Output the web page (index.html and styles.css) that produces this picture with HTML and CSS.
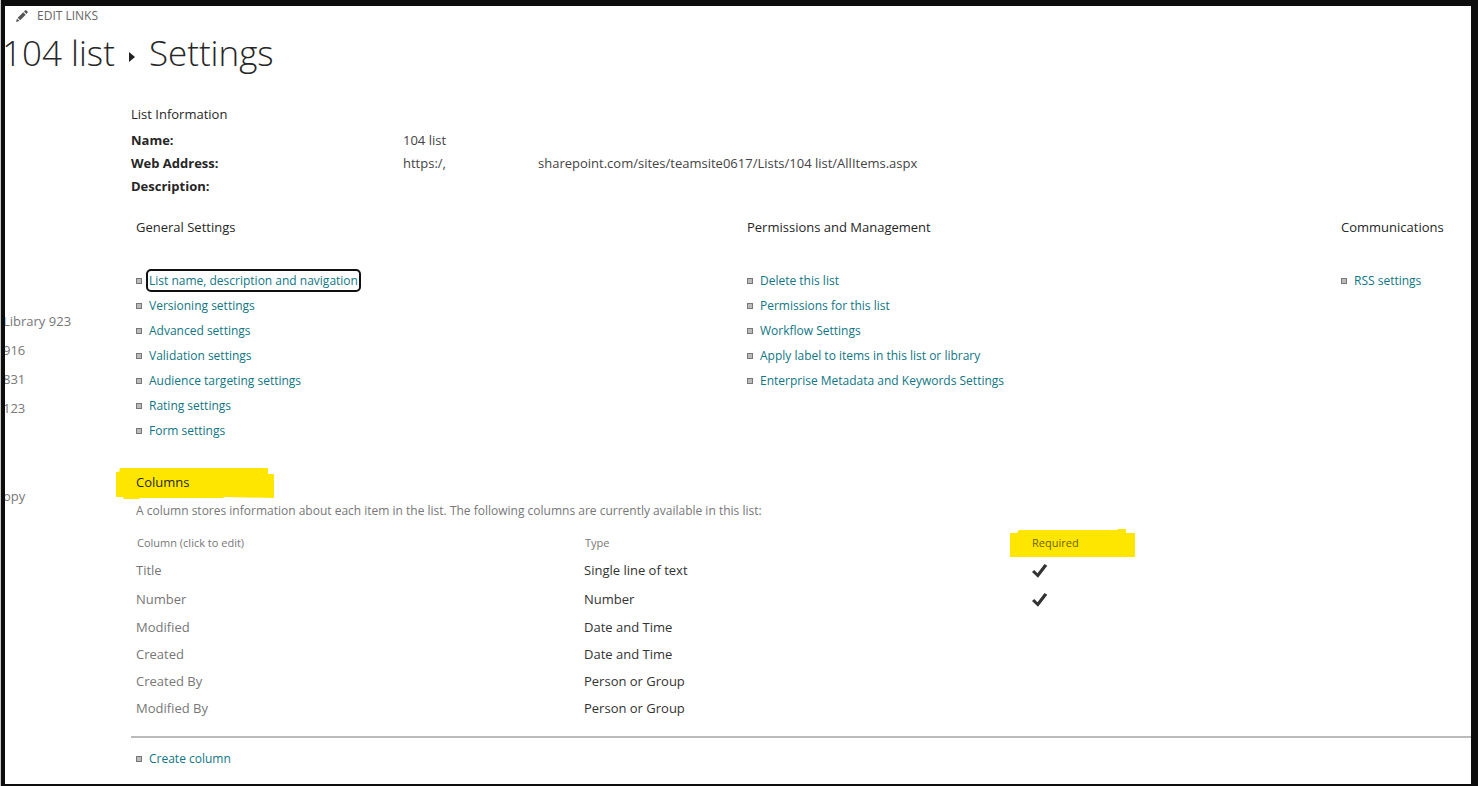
FILE: index.html
```html
<!DOCTYPE html>
<html lang="en">
<head>
<meta charset="utf-8">
<title>104 list - Settings</title>
<link rel="stylesheet" href="styles.css">
</head>
<body>
<div class="page">
  <header class="header">
    <button class="edit-links" type="button">
      <svg class="pencil" viewBox="0 0 12 12" aria-hidden="true"><path d="M0 12 1 8.500 3.500 11zM1.700 7.800 7.300 2.300 9.700 4.700 4.200 10.300zM8 1.600 9.300.3Q9.700 0 10.200.3L11.700 1.800Q12 2.200 11.700 2.600L10.400 4z"/></svg>
      <span>EDIT LINKS</span>
    </button>
    <h1 class="title">
      <span>104 list</span>
      <svg class="crumb" viewBox="0 0 6 10" aria-hidden="true"><path d="M0 0 6 5 0 10z"/></svg>
      <span>Settings</span>
    </h1>
  </header>
  <div class="body">
    <nav class="side" aria-label="Site">
      <a href="#">Library 923</a>
      <a href="#">916</a>
      <a href="#">831</a>
      <a href="#">123</a>
      <a class="side-last" href="#">opy</a>
    </nav>
    <main class="main">
      <section>
        <h2 class="heading">List Information</h2>
        <dl class="info">
          <dt>Name:</dt><dd>104 list</dd>
          <dt>Web Address:</dt><dd class="address"><span>https:/,</span><span>sharepoint.com/sites/teamsite0617/Lists/104 list/AllItems.aspx</span></dd>
          <dt>Description:</dt><dd></dd>
        </dl>
      </section>
      <div class="groups">
        <section>
          <h2 class="heading">General Settings</h2>
          <ul class="links">
            <li><a class="focused" href="#">List name, description and navigation</a></li>
            <li><a href="#">Versioning settings</a></li>
            <li><a href="#">Advanced settings</a></li>
            <li><a href="#">Validation settings</a></li>
            <li><a href="#">Audience targeting settings</a></li>
            <li><a href="#">Rating settings</a></li>
            <li><a href="#">Form settings</a></li>
          </ul>
        </section>
        <section>
          <h2 class="heading">Permissions and Management</h2>
          <ul class="links">
            <li><a href="#">Delete this list</a></li>
            <li><a href="#">Permissions for this list</a></li>
            <li><a href="#">Workflow Settings</a></li>
            <li><a href="#">Apply label to items in this list or library</a></li>
            <li><a href="#">Enterprise Metadata and Keywords Settings</a></li>
          </ul>
        </section>
        <section>
          <h2 class="heading">Communications</h2>
          <ul class="links">
            <li><a href="#">RSS settings</a></li>
          </ul>
        </section>
      </div>
      <section class="columns">
        <h2 class="heading marked">
          <svg class="marker marker-heading" viewBox="0 0 160 34" aria-hidden="true"><path d="M4 1H152V7H158V31L108 30 107 31 24 31 23 32 8 32 7 30H0V5H3z"/></svg>
          <span>Columns</span>
        </h2>
        <p class="note">A column stores information about each item in the list. The following columns are currently available in this list:</p>
        <table class="table">
          <thead>
            <tr><th>Column (click to edit)</th><th>Type</th><th><span class="marked"><svg class="marker marker-required" viewBox="0 0 126 30" aria-hidden="true"><path d="M0 5H7L9 2 107 2 108 1H116V5H125V29H0z"/></svg><span>Required</span></span></th></tr>
          </thead>
          <tbody>
            <tr class="required"><td><a href="#">Title</a></td><td>Single line of text</td><td><svg class="check" viewBox="0 0 16 14" role="img" aria-label="Yes"><path d="M0 8 2.200 6 5.500 9.200 12.500 0 15.300 1.700 6 13.700z"/></svg></td></tr>
            <tr class="required"><td><a href="#">Number</a></td><td>Number</td><td><svg class="check" viewBox="0 0 16 14" role="img" aria-label="Yes"><path d="M0 8 2.200 6 5.500 9.200 12.500 0 15.300 1.700 6 13.700z"/></svg></td></tr>
            <tr><td><a href="#">Modified</a></td><td>Date and Time</td><td></td></tr>
            <tr><td><a href="#">Created</a></td><td>Date and Time</td><td></td></tr>
            <tr><td><a href="#">Created By</a></td><td>Person or Group</td><td></td></tr>
            <tr><td><a href="#">Modified By</a></td><td>Person or Group</td><td></td></tr>
          </tbody>
        </table>
      </section>
      <ul class="links actions">
        <li><a href="#">Create column</a></li>
      </ul>
    </main>
  </div>
</div>
</body>
</html>
```
FILE: styles.css
```css
*, *::before { box-sizing: border-box; }
body {
  margin: 0;
  border-left: 1px solid #c8caca;
  background: #fff;
  color: #333;
  font: 13px/20px "Open Sans", "Noto Sans", sans-serif;
}
.page {
  min-height: 100vh;
  border: solid #0d0d0d;
  border-width: 6px 7px 2px 4px;
  overflow: hidden;
}
a { text-decoration: none; }
h1, h2, p, ul, dl, dd { margin: 0; padding: 0; }
.edit-links {
  display: flex;
  align-items: center;
  gap: 9px;
  height: 20px;
  margin-left: 11px;
  padding: 0;
  border: 0;
  background: none;
  color: #666;
  font: 12px/20px "Open Sans", "Noto Sans", sans-serif;
}
.pencil { width: 12px; height: 12px; fill: #555; }
.title {
  display: flex;
  align-items: center;
  gap: 14px;
  margin-left: -3px;
  color: #262626;
  font-size: 35px;
  line-height: 54px;
  font-weight: 300;
}
.crumb { width: 6px; height: 10px; margin-top: 8px; fill: #222; }
.body { display: grid; grid-template-columns: 126px 1fr; padding-top: 24px; }
.side { display: flex; flex-direction: column; gap: 9px; padding-top: 207px; }
.side a { margin-left: -2px; color: #777; }
.side .side-last { margin-top: 59px; }
.heading { font-size: 13px; line-height: 20px; font-weight: 400; color: #262626; }
.info { display: grid; grid-template-columns: 272px 1fr; grid-auto-rows: minmax(23px, auto); padding-top: 5px; line-height: 23px; color: #444; }
.info dt { font-weight: 700; color: #262626; }
.address { display: flex; }
.address span:first-child { width: 135px; }
.groups {
  display: grid;
  grid-template-columns: 611fr 594fr 130fr;
  padding: 19px 0 0 5px;
}
.links { list-style: none; padding-top: 31px; font-size: 12px; line-height: 25px; }
.links li { display: flex; align-items: center; gap: 7px; min-height: 25px; }
.links li::before {
  content: "";
  width: 6px;
  height: 6px;
  border: 1px solid #777;
  background: #bbb;
}
.links a { color: #0f7684; }
.links .focused { line-height: 17px; outline: 2px solid #101010; outline-offset: 1px; border-radius: 2px; }
.columns { padding: 29px 0 14px 5px; border-bottom: 2px solid #bbb; }
.marked { position: relative; isolation: isolate; }
.marker { position: absolute; z-index: -1; fill: #ffe600; }
.marker-heading { left: -20px; top: -5px; width: 160px; height: 34px; }
.marker-required { left: -22px; top: -7px; width: 126px; height: 30px; }
.note { padding-top: 10px; color: #777; font-size: 12px; line-height: 18px; }
.table { width: 100%; margin-top: 9px; border-collapse: collapse; table-layout: fixed; }
.table th, .table td { padding: 0; text-align: left; line-height: 27px; }
.table th { padding-left: 1px; color: #777; font-size: 11px; line-height: 27px; font-weight: 400; }
.table th:last-child { padding-left: 0; color: #6b6500; }
.table .required td { line-height: 29px; }
.table th:first-child, .table th:nth-child(2) { width: 448px; }
.table a { color: #777; }
.check { display: block; width: 16px; height: 14px; fill: #333; }
.actions { padding: 8px 0 12px 5px; }
```
